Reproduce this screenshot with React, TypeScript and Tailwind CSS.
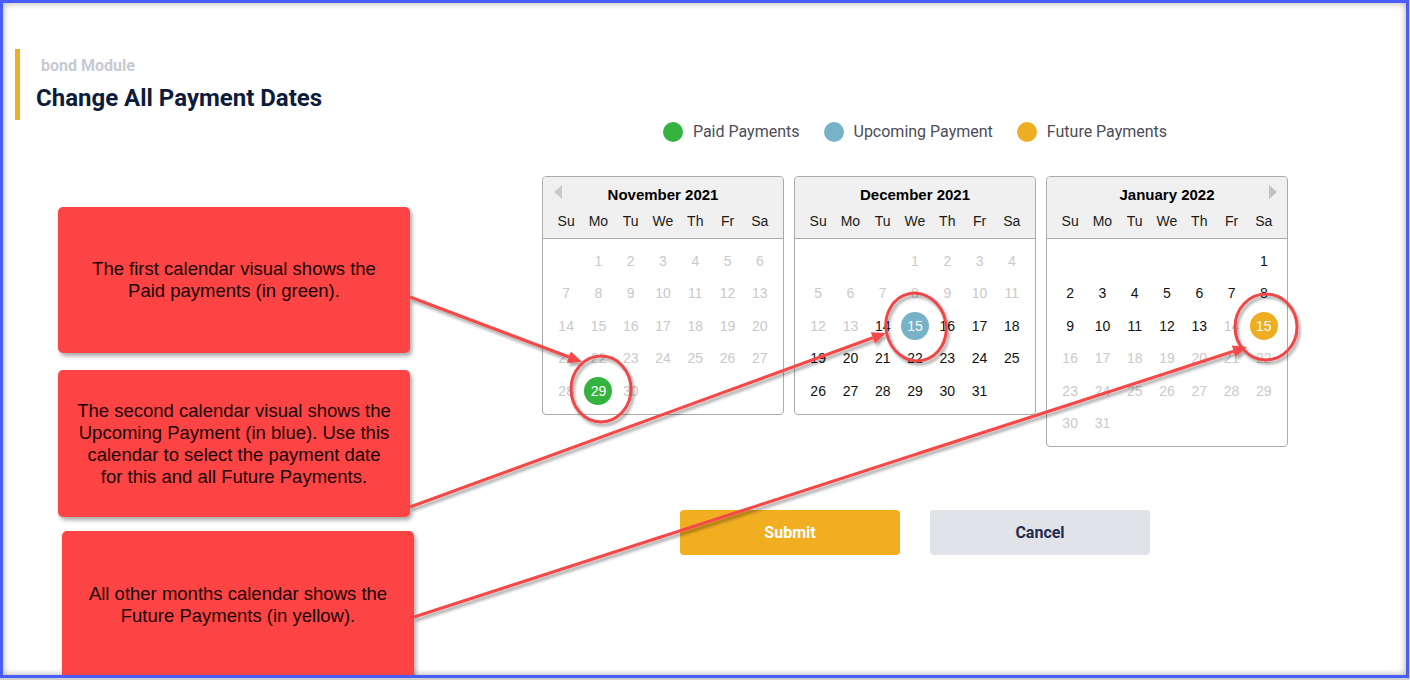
import React from "react";

type Mark = "dim" | "on" | "green" | "blue" | "gold";

const markBg: Record<string, string> = {
  green: "bg-[#34b33f]",
  blue: "bg-[#77b2c8]",
  gold: "bg-[#efad22]",
};

function Calendar({
  title,
  lead,
  days,
  mark,
  prev,
  next,
}: {
  title: string;
  lead: number;
  days: number;
  mark: (d: number) => Mark;
  prev?: boolean;
  next?: boolean;
}) {
  const cells: (number | null)[] = [];
  for (let i = 0; i < lead; i++) cells.push(null);
  for (let d = 1; d <= days; d++) cells.push(d);

  return (
    <div className="w-[242px] rounded-[4px] border border-[#ababab] bg-white font-['Liberation_Sans',Arial,sans-serif]">
      <div className="relative rounded-t-[4px] border-b border-[#ababab] bg-[#f0f0f0] pt-[8px] pb-[7px]">
        {prev && (
          <svg className="absolute left-[11px] top-[8px]" width="8" height="14" viewBox="0 0 8 14">
            <polygon points="8,0 0,7 8,14" fill="#c9c9c9" />
          </svg>
        )}
        {next && (
          <svg className="absolute right-[10px] top-[8px]" width="8" height="14" viewBox="0 0 8 14">
            <polygon points="0,0 8,7 0,14" fill="#c2c2c2" />
          </svg>
        )}
        <p className="text-center text-[15px] font-bold leading-[20px] text-black">{title}</p>
        <div className="mt-[6px] grid grid-cols-7 px-[7px] text-center text-[14px] leading-[20px] text-[#1a1a1a]">
          {["Su", "Mo", "Tu", "We", "Th", "Fr", "Sa"].map((d) => (
            <span key={d}>{d}</span>
          ))}
        </div>
      </div>
      <div className="grid grid-cols-7 px-[7px] pt-[6px] pb-[6px] text-[14px]">
        {cells.map((d, i) => {
          if (d === null) return <div key={i} className="h-[32.5px]" />;
          const m = mark(d);
          if (m === "dim" || m === "on") {
            return (
              <div
                key={i}
                className={
                  "flex h-[32.5px] items-center justify-center " +
                  (m === "dim" ? "text-[#c9c9c9]" : "text-[#111111]")
                }
              >
                {d}
              </div>
            );
          }
          return (
            <div key={i} className="flex h-[32.5px] items-center justify-center">
              <span
                className={
                  "flex h-[28px] w-[28px] items-center justify-center rounded-full text-white " +
                  markBg[m]
                }
              >
                {d}
              </span>
            </div>
          );
        })}
      </div>
    </div>
  );
}

function Note({ children, className = "" }: { children: React.ReactNode; className?: string }) {
  return (
    <div
      className={
        "flex w-[352px] items-center justify-center rounded-[5px] bg-[#fd4445] px-2 text-center font-['Liberation_Sans',Arial,sans-serif] text-[18.5px] leading-[22px] text-[#1a0505] shadow-[2px_3px_4px_rgba(0,0,0,0.35)] " +
        className
      }
    >
      <p>{children}</p>
    </div>
  );
}

function Arrow({ x1, y1, x2, y2 }: { x1: number; y1: number; x2: number; y2: number }) {
  const a = Math.atan2(y2 - y1, x2 - x1);
  const L = 14;
  const W = 6;
  const bx = x2 - L * Math.cos(a);
  const by = y2 - L * Math.sin(a);
  const p1 = `${bx - W * Math.sin(a)},${by + W * Math.cos(a)}`;
  const p2 = `${bx + W * Math.sin(a)},${by - W * Math.cos(a)}`;
  return (
    <g>
      <line x1={x1} y1={y1} x2={bx} y2={by} stroke="#f34a4a" strokeWidth="3.2" />
      <polygon points={`${x2},${y2} ${p1} ${p2}`} fill="#f34a4a" />
    </g>
  );
}

function Legend({ color, label }: { color: string; label: string }) {
  return (
    <div className="flex items-center gap-[10px]">
      <span className={"h-[20px] w-[20px] rounded-full " + color} />
      <span className="text-[16px] leading-[20px] text-[#4b4d57]">{label}</span>
    </div>
  );
}

export default function App() {
  return (
    <div className="relative h-[680px] w-[1410px] bg-[#cfcfcf]">
      <div className="h-[678px] w-[1409px] overflow-hidden border-[3px] border-[#4a5cf6] bg-white font-['Roboto',sans-serif] shadow-[inset_0_0_7px_rgba(0,0,0,0.35)]">
        <div className="ml-[12px] mt-[46px] w-fit border-l-[5px] border-[#efae22] pt-[7px] pb-[8px] pl-[16px]">
          <p className="pl-[5px] text-[16px] font-bold leading-[20px] text-[#c6cad2]">bond Module</p>
          <h1 className="mt-[8px] text-[24px] font-bold leading-[28px] text-[#0e1c3c]">
            Change All Payment Dates
          </h1>
        </div>

        <div className="flex items-start">
          <div className="ml-[55px] w-[360px] pt-[87px]">
            <Note className="h-[146px]">
              The first calendar visual shows the
              <br />
              Paid payments (in green).
            </Note>
            <Note className="mt-[17px] h-[147px]">
              The second calendar visual shows the
              <br />
              Upcoming Payment (in blue). Use this
              <br />
              calendar to select the payment date
              <br />
              for this and all Future Payments.
            </Note>
            <Note className="ml-[4px] mt-[14px] h-[148px]">
              All other months calendar shows the
              <br />
              Future Payments (in yellow).
            </Note>
          </div>

          <div className="ml-[124px] flex w-[746px] flex-col items-center">
            <div className="mt-[2px] flex h-[20px] items-center gap-[24px]">
              <Legend color="bg-[#34b33f]" label="Paid Payments" />
              <Legend color="bg-[#77b2c8]" label="Upcoming Payment" />
              <Legend color="bg-[#efad22]" label="Future Payments" />
            </div>

            <div className="mt-[34px] flex items-start gap-[10px]">
              <Calendar
                title="November 2021"
                lead={1}
                days={30}
                prev
                mark={(d) => (d === 29 ? "green" : "dim")}
              />
              <Calendar
                title="December 2021"
                lead={3}
                days={31}
                mark={(d) => (d === 15 ? "blue" : d < 14 ? "dim" : "on")}
              />
              <Calendar
                title="January 2022"
                lead={6}
                days={31}
                next
                mark={(d) => (d === 15 ? "gold" : d <= 13 ? "on" : "dim")}
              />
            </div>

            <div className="mt-[63px] flex gap-[30px]">
              <button className="h-[45px] w-[220px] rounded-[4px] bg-[#f0ae20] text-[16px] font-bold text-white">
                Submit
              </button>
              <button className="h-[45px] w-[220px] rounded-[4px] bg-[#e1e3e8] text-[16px] font-bold text-[#1e2d4f]">
                Cancel
              </button>
            </div>
          </div>
        </div>
      </div>

      <svg className="pointer-events-none absolute inset-0" width="1410" height="680" viewBox="0 0 1410 680">
        <defs>
          <filter id="sh" x="-10%" y="-10%" width="120%" height="120%">
            <feDropShadow dx="2" dy="3" stdDeviation="1.8" floodColor="#000" floodOpacity="0.35" />
          </filter>
        </defs>
        <g filter="url(#sh)">
          <Arrow x1={410} y1={297} x2={582} y2={362} />
          <Arrow x1={410} y1={507} x2={886} y2={333} />
          <Arrow x1={414} y1={617} x2={1247} y2={347} />
          <ellipse cx={601} cy={389} rx={30} ry={33} fill="none" stroke="#ef4747" strokeWidth="3" />
          <ellipse
            cx={916}
            cy={327}
            rx={30}
            ry={34}
            fill="none"
            stroke="#ef4747"
            strokeWidth="3"
            transform="rotate(-12 916 327)"
          />
          <ellipse cx={1266} cy={327} rx={31} ry={33} fill="none" stroke="#ef4747" strokeWidth="3" />
        </g>
      </svg>
    </div>
  );
}
